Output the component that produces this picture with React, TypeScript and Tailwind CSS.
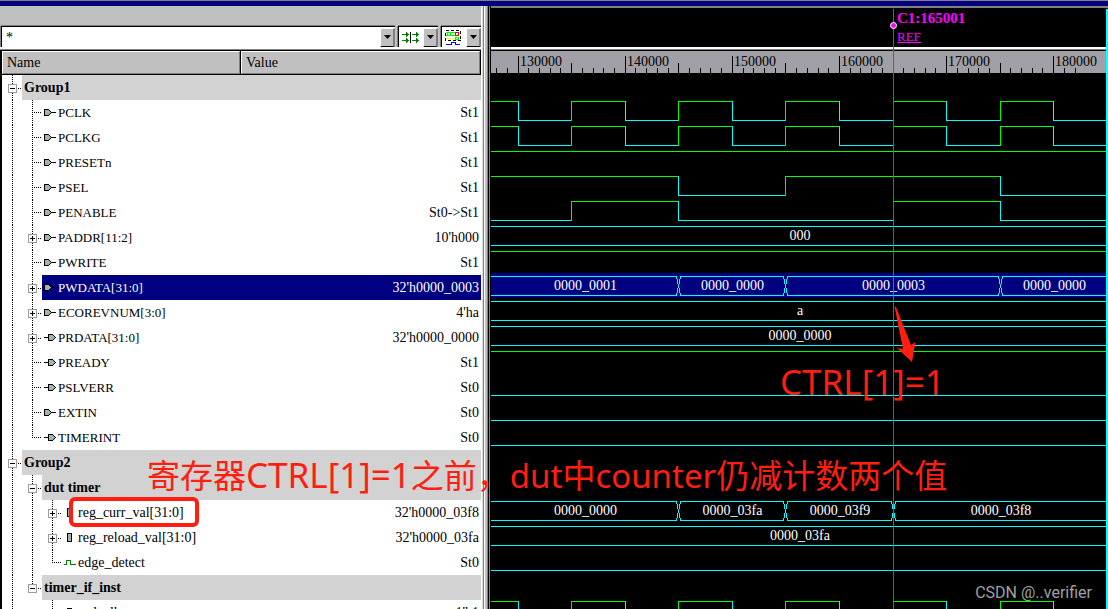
import { useState } from 'react';
import { clsx } from 'clsx';

type Lane = 'none' | 'pipe' | 'tee' | 'end' | 'plus' | 'minus' | 'minusLast';
type Icon = 'in' | 'out' | 'reg' | 'wire';
type Level = { kind: 'bit'; start: 0 | 1; edges: number[] };
type Bus = { kind: 'bus'; values: string[]; edges: number[] };

interface Signal {
  name: string;
  lanes: Lane[];
  value?: string;
  icon?: Icon;
  group?: boolean;
  wave?: Level | Bus;
}

const CLOCK = [130000, 135000, 140000, 145000, 150000, 155000, 160000, 165000, 170000, 175000, 180000];

const bit = (start: 0 | 1, edges: number[] = []): Level => ({ kind: 'bit', start, edges });
const bus = (values: string[], edges: number[] = []): Bus => ({ kind: 'bus', values, edges });

const signals: Signal[] = [
  { name: 'Group1', lanes: ['minus'], group: true },
  { name: 'PCLK', lanes: ['pipe', 'tee'], value: 'St1', icon: 'in', wave: bit(1, CLOCK) },
  { name: 'PCLKG', lanes: ['pipe', 'tee'], value: 'St1', icon: 'in', wave: bit(1, CLOCK) },
  { name: 'PRESETn', lanes: ['pipe', 'tee'], value: 'St1', icon: 'in', wave: bit(1) },
  { name: 'PSEL', lanes: ['pipe', 'tee'], value: 'St1', icon: 'in', wave: bit(1, [145000, 155000, 175000]) },
  { name: 'PENABLE', lanes: ['pipe', 'tee'], value: 'St0->St1', icon: 'in', wave: bit(0, [135000, 145000, 165000, 175000]) },
  { name: 'PADDR[11:2]', lanes: ['pipe', 'plus'], value: "10'h000", icon: 'in', wave: bus(['000']) },
  { name: 'PWRITE', lanes: ['pipe', 'tee'], value: 'St1', icon: 'in', wave: bit(1) },
  {
    name: 'PWDATA[31:0]',
    lanes: ['pipe', 'plus'],
    value: "32'h0000_0003",
    icon: 'in',
    wave: bus(['0000_0001', '0000_0000', '0000_0003', '0000_0000'], [145000, 155000, 175000]),
  },
  { name: 'ECOREVNUM[3:0]', lanes: ['pipe', 'plus'], value: "4'ha", icon: 'in', wave: bus(['a']) },
  { name: 'PRDATA[31:0]', lanes: ['pipe', 'plus'], value: "32'h0000_0000", icon: 'out', wave: bus(['0000_0000']) },
  { name: 'PREADY', lanes: ['pipe', 'tee'], value: 'St1', icon: 'out', wave: bit(1) },
  { name: 'PSLVERR', lanes: ['pipe', 'tee'], value: 'St0', icon: 'out', wave: bit(0) },
  { name: 'EXTIN', lanes: ['pipe', 'tee'], value: 'St0', icon: 'in', wave: bit(0) },
  { name: 'TIMERINT', lanes: ['pipe', 'end'], value: 'St0', icon: 'out', wave: bit(0) },
  { name: 'Group2', lanes: ['minus'], group: true },
  { name: 'dut timer', lanes: ['pipe', 'minus'], group: true },
  {
    name: 'reg_curr_val[31:0]',
    lanes: ['pipe', 'pipe', 'plus'],
    value: "32'h0000_03f8",
    icon: 'reg',
    wave: bus(['0000_0000', '0000_03fa', '0000_03f9', '0000_03f8'], [145000, 155000, 165000]),
  },
  { name: 'reg_reload_val[31:0]', lanes: ['pipe', 'pipe', 'plus'], value: "32'h0000_03fa", icon: 'reg', wave: bus(['0000_03fa']) },
  { name: 'edge_detect', lanes: ['pipe', 'pipe', 'end'], value: 'St0', icon: 'wire', wave: bit(0) },
  { name: 'timer_if_inst', lanes: ['pipe', 'minusLast'], group: true },
  { name: 'prd_clk', lanes: ['pipe', 'none', 'tee'], value: "1'h1", icon: 'reg', wave: bit(1, CLOCK) },
];

const PLOT_END = 616;
const FAR = 4000;
const HIGH = 3;
const LOW = 22;
const GREEN = '#00ff00';
const CYAN = '#00ffff';

const timeToX = (t: number) => Math.round(26.6 + ((t - 130000) / 1000) * 10.712);

function LaneCell({ type, label }: { type: Lane; label: string }) {
  const box = type === 'plus' || type === 'minus' || type === 'minusLast';
  const drawing = (
    <svg className="block h-[25px] w-5" viewBox="0 0 20 25" shapeRendering="crispEdges" aria-hidden="true">
      <g stroke="#000" strokeDasharray="1 1">
        {type !== 'none' && <path d={type === 'end' || type === 'minusLast' ? 'M10.5 0V13' : 'M10.5 0V25'} />}
        {(type === 'tee' || type === 'end') && <path d="M12 12.5H19" />}
        {box && <path d="M16 13.5H20" />}
      </g>
      {box && <path d="M6.5 9.5h8v8h-8z" fill="#fff" stroke="#9c9ca0" />}
      {box && <path d="M8 13.5h5" stroke="#000" />}
      {type === 'plus' && <path d="M10.5 11v5" stroke="#000" />}
    </svg>
  );
  return box ? (
    <button type="button" aria-label={`Toggle ${label}`} className="shrink-0">
      {drawing}
    </button>
  ) : (
    <span className="shrink-0">{drawing}</span>
  );
}

function SignalIcon({ type }: { type: Icon }) {
  return (
    <svg className="block h-[9px] w-3 shrink-0" viewBox="0 0 12 9" shapeRendering="crispEdges" aria-hidden="true">
      {type === 'in' && <path d="M.5 1.5h4l3 3-3 3h-4zM7 4.5h5" fill="#9fb5a9" stroke="#000" />}
      {type === 'out' && <path d="M4.5 1.5h4l3 3-3 3h-4zM0 4.5h5" fill="#9fb5a9" stroke="#000" />}
      {type === 'reg' && <path d="M3.5 .5h4v8h-4z" fill="#9fb5a9" stroke="#000" />}
      {type === 'wire' && <path d="M0 6.5h2.5v-4h4v4H12" fill="none" stroke="#008000" />}
    </svg>
  );
}

function TreeRow({ signal, selected, onSelect }: { signal: Signal; selected: boolean; onSelect: () => void }) {
  const tone = clsx(signal.group && 'bg-[#d2d2d2]', selected && 'bg-[#000080] text-white');
  return (
    <tr className="h-[25px]" onClick={onSelect}>
      <td className="p-0">
        <div className="flex h-[25px]">
          {signal.lanes.map((lane, i) => (
            <LaneCell key={i} type={lane} label={signal.name} />
          ))}
          <div className={clsx('flex min-w-0 flex-1 items-center whitespace-nowrap', tone, signal.group ? 'pl-0.5 font-bold' : 'gap-0.5 pl-0.5')}>
            {signal.icon && <SignalIcon type={signal.icon} />}
            <span className={clsx(signal.lanes.length === 2 && !signal.group ? 'text-[13px]' : 'text-sm', 'leading-[25px]')}>
              {signal.name}
            </span>
          </div>
        </div>
      </td>
      <td className={clsx('p-0 pr-0.5 text-right text-sm leading-[25px]', tone)}>{signal.value}</td>
    </tr>
  );
}

function WaveRow({ wave, selected }: { wave?: Level | Bus; selected: boolean }) {
  const xs = wave ? [0, ...wave.edges.map(timeToX)] : [];
  return (
    <svg className={clsx('block h-[25px] w-full shrink-0', selected && 'bg-[#000080]')} fill="none" shapeRendering="crispEdges">
      {wave?.kind === 'bit' &&
        xs.map((x, i) => {
          const high = (wave.start + i) % 2 === 1;
          const y = (high ? HIGH : LOW) + 0.5;
          const end = xs[i + 1] ?? FAR;
          return (
            <g key={x} stroke={high ? GREEN : CYAN}>
              {i > 0 && <path d={`M${x + 0.5} ${HIGH}V${LOW + 1}`} />}
              <path d={`M${x} ${y}H${end}`} />
            </g>
          );
        })}
      {wave?.kind === 'bus' &&
        xs.map((x, i) => {
          const last = i === xs.length - 1;
          const end = xs[i + 1] ?? PLOT_END;
          const a = x + 0.5;
          const left = i === 0 ? `M0 ${HIGH + 0.5}` : `M${a} 13L${a + 2} ${HIGH + 0.5}`;
          const leftLow = i === 0 ? `M0 ${LOW + 0.5}` : `M${a} 13L${a + 2} ${LOW + 0.5}`;
          const right = last ? `H${FAR}` : `H${end - 1.5}L${end + 0.5} 13`;
          return (
            <g key={x}>
              <path d={`${left}${right}${leftLow}${right}`} stroke={CYAN} />
              <text x={(x + end) / 2 + 1} y="17" textAnchor="middle" fill="#fff" className="text-sm">
                {wave.values[i]}
              </text>
            </g>
          );
        })}
    </svg>
  );
}

function Ruler() {
  const ticks = Array.from({ length: 55 }, (_, i) => 128000 + i * 1000);
  return (
    <svg className="block h-[22px] w-full shrink-0 bg-[#9f9fa5]" shapeRendering="crispEdges">
      {ticks.map((t) => {
        const x = timeToX(t);
        const major = t % 10000 === 0;
        const top = major ? 5 : t % 5000 === 0 ? 12 : 17;
        return (
          <g key={t}>
            <path d={`M${x + 0.5} ${top}V22`} stroke="#000" />
            {major && (
              <text x={x + 2} y="15" fill="#000" className="text-sm">
                {t}
              </text>
            )}
          </g>
        );
      })}
    </svg>
  );
}

function DropArrow({ label }: { label: string }) {
  return (
    <button
      type="button"
      aria-label={label}
      className="flex h-5 w-[15px] shrink-0 items-center justify-center border-t border-l border-r-2 border-b-2 border-t-white border-l-white border-r-[#808080] border-b-black bg-[#c0c0c0]"
    >
      <svg className="h-1 w-[7px]" viewBox="0 0 7 4" aria-hidden="true">
        <path d="M0 0h7L3.5 4z" />
      </svg>
    </button>
  );
}

const sunken = 'flex h-[22px] items-center border-t border-l border-black bg-white shadow-[0_-1px_0_#808080,-1px_0_0_#808080,0_1px_0_#e8e8e8]';

function FilterBar() {
  return (
    <div className="flex h-[21px] gap-[3px] pl-px">
      <div className={clsx(sunken, 'min-w-0 flex-1')}>
        <input aria-label="Signal filter" defaultValue="*" className="h-5 min-w-0 flex-1 bg-transparent pl-1 text-sm outline-none" />
        <DropArrow label="Filter history" />
      </div>
      <div className={clsx(sunken, 'w-10 justify-between')}>
        <svg className="ml-[3px] h-3 w-[18px]" viewBox="0 0 18 12" fill="none" shapeRendering="crispEdges" aria-hidden="true">
          <path
            d="M0 2.5h7M0 8.5h7M10 2.5h7M10 8.5h7M4 .5l2 2-2 2M4 6.5l2 2-2 2M14 .5l2 2-2 2M14 6.5l2 2-2 2"
            stroke="#008000"
          />
          <path d="M8.5 0v11" stroke="#000" />
        </svg>
        <DropArrow label="Signal direction" />
      </div>
      <div className={clsx(sunken, 'w-10 justify-between')}>
        <svg className="ml-[3px] h-4 w-4" viewBox="0 0 16 16" fill="none" shapeRendering="crispEdges" aria-hidden="true">
          <path d="M.5 .5h15v10H.5z" stroke="#000" strokeDasharray="3 2" />
          <path d="M1 2.5h9M1 5.5h9M2.5 2v4M5.5 2v4" stroke="#00ff00" />
          <path d="M10.5 2.5h3v3h-3z" stroke="#ff0000" />
          <path d="M1 8.5h9" stroke="#ffff00" />
          <path d="M10.5 7.5h3v2h-3z" stroke="#00ff00" />
          <path d="M1 14.5h5v-2h4v2h5" stroke="#0000ff" />
        </svg>
        <DropArrow label="Signal type" />
      </div>
    </div>
  );
}

const bevel = 'h-[23px] border border-t-white border-l-white border-r-[#808080] border-b-[#808080] bg-[#c0c0c0] pl-1 text-left text-sm leading-[22px] font-normal';

function Splitter() {
  return (
    <div className="flex w-[9px] shrink-0">
      <div className="w-px bg-white" />
      <div className="w-px bg-[#dcdcdc]" />
      <div className="w-px bg-[#808080]" />
      <div className="w-px bg-white" />
      <div className="w-0.5 bg-[#c0c0c0]" />
      <div className="w-px bg-[#808080]" />
      <div className="w-px bg-black" />
      <div className="w-px bg-[#808080]" />
    </div>
  );
}

function Annotations() {
  return (
    <div className="pointer-events-none absolute inset-0 overflow-hidden text-[33px] leading-[40px] whitespace-nowrap text-[#ff1e10] [font-family:'Noto_Sans','Noto_Sans_CJK_SC',sans-serif]">
      <div className="absolute top-[497px] left-[69px] h-[30px] w-[130px] rounded-md border-4 border-[#ff1e10]" />
      <p className="absolute top-[455px] left-[147px]">
        寄存器<span className="text-[35px]">CTRL[1]=1</span>之前，dut中counter仍减计数两个值
      </p>
      <p className="absolute top-[362px] left-[780px] text-[35px]">CTRL[1]=1</p>
      <svg className="absolute top-[306px] left-[894px] h-14 w-[22px]" viewBox="0 0 22 56" aria-hidden="true">
        <path d="M.5 .5L2 1l15 38 4.5-3L18 56 3 42l6 1z" fill="#ff1e10" />
      </svg>
    </div>
  );
}

export default function App() {
  const [selected, setSelected] = useState(8);

  return (
    <div className="relative flex h-screen w-full flex-col overflow-hidden bg-[#c0c0c0] text-black [font-family:'Liberation_Serif',serif]">
      <div className="h-1.5 shrink-0 border-t border-[#808080] bg-[#000080]" />

      <main className="flex min-h-0 flex-1">
        {/* signal list */}
        <section className="flex w-[481px] shrink-0 flex-col">
          <div className="h-5 shrink-0" />
          <FilterBar />
          <div className="h-[3px] shrink-0 border-b border-b-[#808080] bg-white" />
          <div className="min-h-0 flex-1 overflow-hidden border-t border-l-2 border-black bg-white">
            <table className="w-full table-fixed">
              <thead>
                <tr className="h-6">
                  <th className="w-[239px] p-0">
                    <div className="border-r border-b border-black">
                      <div className={bevel}>Name</div>
                    </div>
                  </th>
                  <th className="p-0">
                    <div className="border-r border-b border-black">
                      <div className={bevel}>Value</div>
                    </div>
                  </th>
                </tr>
              </thead>
              <tbody>
                {signals.map((s, i) => (
                  <TreeRow key={s.name} signal={s} selected={i === selected} onSelect={() => setSelected(i)} />
                ))}
              </tbody>
            </table>
          </div>
        </section>

        <Splitter />

        {/* waveforms */}
        <section className="relative flex min-w-0 flex-1 flex-col overflow-hidden border-l border-black bg-black">
          <div className="h-[41px] shrink-0 border-t-2 border-[#808080]" />
          <div className="h-[3px] shrink-0 border-t-2 border-b border-t-white border-b-[#808080]" />
          <div className="h-px shrink-0" />
          <Ruler />
          {signals.map((s, i) => (
            <WaveRow key={s.name} wave={s.wave} selected={i === selected} />
          ))}

          <div className="absolute top-[3px] bottom-0 left-[402px] w-px bg-[#f000f0]" />
          <div className="absolute top-4 left-[399px] size-[7px] rounded-full border border-white bg-[#ff00ff]" />
          <div className="absolute top-[3px] left-[406px] text-[#ff00ff]">
            <div className="text-[15px] leading-[18px] font-bold">C1:165001</div>
            <div className="text-[13px] leading-5 underline">REF</div>
          </div>
          <div className="absolute top-[3px] right-0 bottom-0 w-0.5 bg-[#00ffff]" />
          <p className="absolute right-4 bottom-1.5 text-base leading-5 text-[#a0a0a0] [font-family:Roboto,sans-serif]">
            CSDN @..verifier
          </p>
        </section>
      </main>

      <Annotations />
    </div>
  );
}
